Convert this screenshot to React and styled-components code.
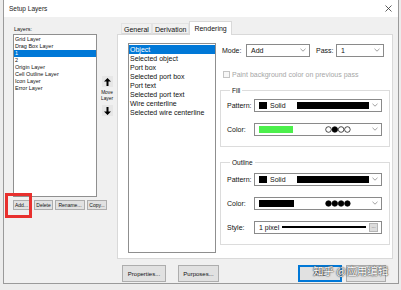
import React from 'react';
import styled, { createGlobalStyle } from 'styled-components';

const Global = createGlobalStyle`
  html, body {
    margin: 0;
    padding: 0;
    background: #ececec;
    font-family: "Liberation Sans", Arial, sans-serif;
  }
`;

const Page = styled.div`
  width: 401px;
  height: 290px;
  padding-left: 3px;
  box-sizing: border-box;
  overflow: hidden;
  position: relative;
`;

const Dialog = styled.div`
  width: 396px;
  height: 284px;
  box-sizing: border-box;
  border: 1px solid #9a9a9a;
  border-top: none;
  background: #f0f0f0;
  display: flex;
  flex-direction: column;
`;

const TitleBar = styled.div`
  height: 17px;
  background: #ffffff;
  display: flex;
  align-items: center;
  justify-content: space-between;
  padding: 0 6px 0 5px;
  flex-shrink: 0;
`;

const Title = styled.span`
  font-size: 6.5px;
  color: #222;
`;

const Body = styled.div`
  display: flex;
  padding: 4px 0 0 9px;
  gap: 3px;
`;

const LeftPane = styled.div`
  display: grid;
  grid-template-columns: 84px 14px;
  column-gap: 3px;
  grid-template-rows: auto 163px auto;
  padding-top: 4px;
  align-self: flex-start;
  font-size: 5.5px;
  color: #111;
`;

const Label = styled.div`
  grid-column: 1 / 3;
  height: 8px;
  line-height: 8px;
  margin-bottom: 1px;
  padding-left: 1px;
`;

const ListBox = styled.div`
  background: #fff;
  border: 1px solid #8f8f8f;
  box-sizing: border-box;
  padding: 1px 0 0;
  font-size: ${p => p.size || 5.5}px;
`;

const Item = styled.div`
  height: ${p => p.h}px;
  line-height: ${p => p.h}px;
  padding-left: 1px;
  white-space: nowrap;
  background: ${p => (p.selected ? '#0078d7' : 'transparent')};
  color: ${p => (p.selected ? '#fff' : '#111')};
`;

const MoveCol = styled.div`
  display: flex;
  flex-direction: column;
  align-items: center;
  margin-top: 42px;
  gap: 3px;
`;

const ArrowBtn = styled.div`
  width: 11px;
  height: 11px;
  background: #e6e6e6;
  display: flex;
  align-items: center;
  justify-content: center;
`;

const MoveText = styled.div`
  font-size: 4.8px;
  line-height: 6px;
  text-align: center;
`;

const ButtonRow = styled.div`
  grid-column: 1 / 3;
  display: flex;
  gap: 2px;
  margin-top: 3px;
`;

const SmallBtn = styled.div`
  width: ${p => p.w}px;
  height: 10px;
  margin-right: ${p => p.mr || 0}px;
  background: #e1e1e1;
  border: 1px solid #adadad;
  box-sizing: border-box;
  font-size: 5px;
  line-height: 8px;
  text-align: center;
  white-space: nowrap;
`;

const RightPane = styled.div`
  display: flex;
  flex-direction: column;
  width: 276px;
  font-size: 7px;
  color: #111;
`;

const TabStrip = styled.div`
  display: flex;
  align-items: flex-end;
  height: 13px;
  padding-left: 4px;
  position: relative;
  z-index: 1;
`;

const Tab = styled.div`
  height: ${p => (p.active ? 14 : 11)}px;
  line-height: ${p => (p.active ? 13 : 11)}px;
  padding: 0 ${p => (p.active ? 4 : 2)}px;
  margin-bottom: ${p => (p.active ? -1 : 0)}px;
  background: ${p => (p.active ? '#fff' : '#f0f0f0')};
  border: 1px solid ${p => (p.active ? '#d9d9d9' : '#e3e3e3')};
  border-bottom: ${p => (p.active ? 'none' : '1px solid #d9d9d9')};
  box-sizing: border-box;
  white-space: nowrap;
`;

const Panel = styled.div`
  height: 225px;
  box-sizing: border-box;
  background: #fff;
  border: 1px solid #d9d9d9;
  display: flex;
  gap: 3px;
  padding: 8px 5px 5px 10px;
`;

const Form = styled.div`
  flex: 1;
  display: flex;
  flex-direction: column;
`;

const Row = styled.div`
  display: flex;
  align-items: center;
  height: 14px;
  margin-top: ${p => p.mt || 0}px;
`;

const FieldLabel = styled.span`
  width: ${p => p.w}px;
  flex-shrink: 0;
  padding-left: ${p => p.pl || 0}px;
  white-space: nowrap;
`;

const Combo = styled.div`
  width: ${p => p.w}px;
  height: 13px;
  box-sizing: border-box;
  border: 1px solid #8a8a8a;
  background: #fff;
  display: flex;
  align-items: center;
  padding: 0 3px 0 4px;
  gap: 3px;
  flex-shrink: 0;
`;

const ComboText = styled.span`
  flex: 1;
  white-space: nowrap;
`;

const Swatch = styled.span`
  width: ${p => p.w}px;
  height: 7px;
  background: ${p => p.color};
  flex-shrink: 0;
`;

const DotsWrap = styled.span`
  flex: 1;
  display: flex;
  justify-content: center;
  padding-left: 10px;
`;

const Check = styled.span`
  width: 7px;
  height: 7px;
  box-sizing: border-box;
  border: 1px solid #c4c4c4;
  background: #f7f7f7;
  margin: 0 2px 0 4px;
`;

const Disabled = styled.span`
  color: #a6a6a6;
`;

const Group = styled.fieldset`
  margin: ${p => p.mt}px 0 0 1px;
  width: 168px;
  box-sizing: border-box;
  border: 1px solid #dcdcdc;
  padding: ${p => p.pt}px 7px ${p => p.pb}px 6px;
  display: flex;
  flex-direction: column;
  gap: ${p => p.gap}px;
`;

const Legend = styled.legend`
  padding: 0 2px;
  margin-left: 3px;
  font-size: 6.5px;
`;

const Line = styled.span`
  flex: 1;
  height: ${p => p.h || 2}px;
  margin-left: ${p => p.ml || 0}px;
  background: #000;
`;

const DotsBtn = styled.span`
  width: 9px;
  height: 9px;
  background: #dcdcdc;
  border: 1px solid #b5b5b5;
  box-sizing: border-box;
  font-size: 5px;
  line-height: 5px;
  text-align: center;
  color: #555;
`;

const Footer = styled.div`
  display: flex;
  align-items: center;
  padding: 6px 0 0 5px;
  gap: 12px;
`;

const PushBtn = styled.div`
  width: ${p => p.w}px;
  height: 17px;
  box-sizing: border-box;
  background: #e1e1e1;
  border: ${p => (p.primary ? '2px solid #0078d7' : '1px solid #adadad')};
  font-size: 6px;
  display: flex;
  align-items: center;
  justify-content: center;
  margin-left: ${p => p.ml || 0}px;
  white-space: nowrap;
`;

const RedMark = styled.div`
  position: absolute;
  left: 5px;
  top: 193px;
  width: 27px;
  height: 25px;
  box-sizing: border-box;
  border: 3px solid #e8302e;
`;

const Watermark = styled.div`
  position: absolute;
  left: 313px;
  top: 264px;
  font-family: "Noto Sans CJK SC", sans-serif;
  font-size: 10.5px;
  line-height: 14px;
  color: #fff;
  text-shadow: 0 0 1px #444, 0 0 1px #444, 0 0 2px #666;
  white-space: nowrap;
`;

const Chevron = () => (
  <svg width="6" height="4" viewBox="0 0 6 4">
    <path d="M0.5 0.8 L3 3.2 L5.5 0.8" fill="none" stroke="#888" strokeWidth="0.8" />
  </svg>
);

const Arrow = ({ down }) => (
  <svg width="7" height="8" viewBox="0 0 7 8" style={down ? { transform: 'rotate(180deg)' } : undefined}>
    <path d="M3.5 0 L7 3.6 L4.5 3.6 L4.5 8 L2.5 8 L2.5 3.6 L0 3.6 Z" fill="#000" />
  </svg>
);

// pattern preview: four dots, filled ones marked true
const Dots = ({ fills }) => (
  <DotsWrap>
    <svg width="26" height="7" viewBox="0 0 26 7">
      {fills.map((f, i) => (
        <circle key={i} cx={3.5 + i * 6.3} cy="3.5" r="2.8" fill={f ? '#000' : '#fff'} stroke="#000" strokeWidth="0.7" />
      ))}
    </svg>
  </DotsWrap>
);

const layers = ['Grid Layer', 'Drag Box Layer', '1', '2', 'Origin Layer', 'Cell Outline Layer', 'Icon Layer', 'Error Layer'];
const objects = ['Object', 'Selected object', 'Port box', 'Selected port box', 'Port text', 'Selected port text', 'Wire centerline', 'Selected wire centerline'];

export default function App() {
  return (
    <Page>
      <Global />
      <Dialog>
        <TitleBar>
          <Title>Setup Layers</Title>
          <svg width="7" height="7" viewBox="0 0 7 7">
            <path d="M0.5 0.5 L6.5 6.5 M6.5 0.5 L0.5 6.5" stroke="#333" strokeWidth="0.8" />
          </svg>
        </TitleBar>
        <Body>
          <LeftPane>
            <Label>Layers:</Label>
            <ListBox>
              {layers.map(l => (
                <Item key={l} h={7} selected={l === '1'}>{l}</Item>
              ))}
            </ListBox>
            <MoveCol>
              <ArrowBtn><Arrow /></ArrowBtn>
              <MoveText>Move<br />Layer</MoveText>
              <ArrowBtn><Arrow down /></ArrowBtn>
            </MoveCol>
            <ButtonRow>
              <SmallBtn w={17} mr={2}>Add...</SmallBtn>
              <SmallBtn w={19}>Delete</SmallBtn>
              <SmallBtn w={30}>Rename...</SmallBtn>
              <SmallBtn w={20}>Copy...</SmallBtn>
            </ButtonRow>
          </LeftPane>
          <RightPane>
            <TabStrip>
              <Tab>General</Tab>
              <Tab>Derivation</Tab>
              <Tab active>Rendering</Tab>
            </TabStrip>
            <Panel>
              <ListBox style={{ width: 88, flexShrink: 0 }} size={7}>
                {objects.map((o, i) => (
                  <Item key={o} h={9} selected={i === 0}>{o}</Item>
                ))}
              </ListBox>
              <Form>
                <Row>
                  <FieldLabel w={24} pl={3}>Mode:</FieldLabel>
                  <Combo w={64}><ComboText>Add</ComboText><Chevron /></Combo>
                  <FieldLabel w={20} pl={6}>Pass:</FieldLabel>
                  <Combo w={48}><ComboText>1</ComboText><Chevron /></Combo>
                </Row>
                <Row mt={10}>
                  <Check />
                  <Disabled>Paint background color on previous pass</Disabled>
                </Row>
                <Group mt={6} pt={4} pb={10} gap={10}>
                  <Legend>Fill</Legend>
                  <Row>
                    <FieldLabel w={27}>Pattern:</FieldLabel>
                    <Combo w={128}>
                      <Swatch w={8} color="#000" />
                      <span>Solid</span>
                      <Line h={7} ml={8} />
                      <Chevron />
                    </Combo>
                  </Row>
                  <Row>
                    <FieldLabel w={27}>Color:</FieldLabel>
                    <Combo w={128}>
                      <Swatch w={34} color="#4cf04c" />
                      <Dots fills={[false, true, false, false]} />
                      <Chevron />
                    </Combo>
                  </Row>
                </Group>
                <Group mt={12} pt={6} pb={10} gap={10}>
                  <Legend>Outline</Legend>
                  <Row>
                    <FieldLabel w={27}>Pattern:</FieldLabel>
                    <Combo w={128}>
                      <Swatch w={8} color="#000" />
                      <span>Solid</span>
                      <Line h={7} ml={8} />
                      <Chevron />
                    </Combo>
                  </Row>
                  <Row>
                    <FieldLabel w={27}>Color:</FieldLabel>
                    <Combo w={128}>
                      <Swatch w={35} color="#000" />
                      <Dots fills={[true, true, true, true]} />
                      <Chevron />
                    </Combo>
                  </Row>
                  <Row>
                    <FieldLabel w={27}>Style:</FieldLabel>
                    <Combo w={128}>
                      <span>1 pixel</span>
                      <Line />
                      <DotsBtn>...</DotsBtn>
                    </Combo>
                  </Row>
                </Group>
              </Form>
            </Panel>
            <Footer>
              <PushBtn w={44}>Properties...</PushBtn>
              <PushBtn w={41}>Purposes...</PushBtn>
              <PushBtn w={44} ml={67} primary>确定</PushBtn>
              <PushBtn w={40} ml={-8} />
            </Footer>
          </RightPane>
        </Body>
      </Dialog>
      <RedMark />
      <Watermark>知乎 @应用编辑</Watermark>
    </Page>
  );
}
